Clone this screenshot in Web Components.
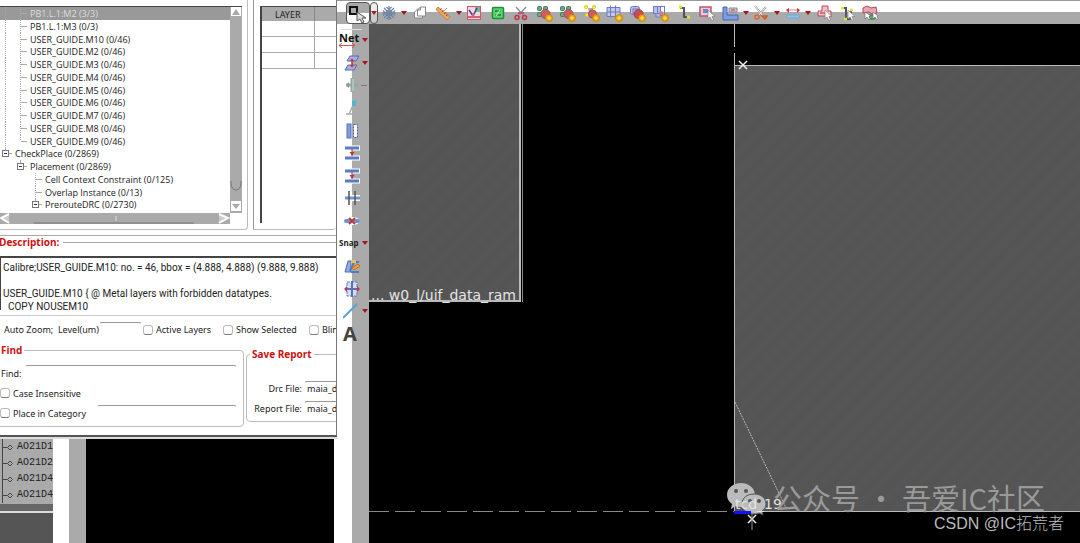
<!DOCTYPE html>
<html lang="en">
<head>
<meta charset="utf-8">
<title>DRC result viewer</title>
<style>
html,body{margin:0;height:100%;background:#000}
body{font-family:"Noto Sans","Open Sans",sans-serif;font-size:9px;line-height:13px;color:#222}
</style>
</head>
<body>
<eda-desktop></eda-desktop>
<script>
const define = (name, html, setup) => customElements.define(name, class extends HTMLElement {
  connectedCallback() {
    if (this.shadowRoot) return;
    const root = this.attachShadow({mode: 'open'});
    const t = document.createElement('template');
    t.innerHTML = typeof html === 'function' ? html(this) : html;
    root.append(t.content.cloneNode(true));
    if (setup) setup(this, root);
  }
});

/* ---------- icons, all on an 18 x 18 grid ---------- */
const plus = '<circle cx="14" cy="14" r="3.6" fill="#f0a400" stroke="#c27800" stroke-width=".6"/><path d="M14 12v4M12 14h4" stroke="#ffe98a" stroke-width="1"/>';
const cursor = '<path d="M10 6v9l2-2 2 4 1.500-1-1.500-3.500h3z" fill="#f4f4f4" stroke="#777" stroke-width=".6"/>';
const sq = (x, y, w, c, s) => `<rect x="${x}" y="${y}" width="${w}" height="${w}" rx="1" fill="${c}" stroke="${s}"/>`;
const ICONS = {
  flake: '<g stroke="#6d87a3" stroke-width="1.200" fill="none"><path d="M9 2v14M2 9h14M4 4l10 10M14 4L4 14"/><circle cx="9" cy="9" r="3"/><path d="M6.500 3L9 5.500 11.500 3M6.500 15L9 12.500l2.500 2.500M3 6.500L5.500 9 3 11.500M15 6.500L12.500 9l2.500 2.500"/></g>',
  copy: '<g fill="#fff" stroke="#888"><path d="M3.500 8l3-3h5v9h-8z"/><path d="M6.500 6l3-3h5v9h-8z"/><path d="M6.500 6h3V3" fill="none"/></g>',
  ruler: '<path d="M4 3l12 10-3 3L2 5.500z" fill="#e7a76c" stroke="#cf8048"/><path d="M6 6l1.500-1.500M8 8l1.500-1.500M10 10l2-2M12 12l1.500-1.500" stroke="#994a20"/><path d="M13 4l-3 3" stroke="#d98a50"/>',
  chart: '<rect x="2.500" y="2.500" width="13" height="13" fill="#f3d9dc" stroke="#d4576b"/><rect x="10" y="3" width="5" height="5" fill="#74b996"/><path d="M4 6l4 6 4-8" fill="none" stroke="#4a3fa8" stroke-width="1.500"/><path d="M3 13h12M8 9v5" stroke="#d2647a" stroke-width="2" fill="none"/>',
  green: '<rect x="3.500" y="3.500" width="11" height="11" rx="1" fill="#5dd56d" stroke="#1e8f35" stroke-width="1.500"/><path d="M6 7h6M6 11h6M7 6v2M11 10v2" stroke="#157a2a"/><path d="M11 6l-4 6" stroke="#b9f5bf"/>',
  cut: '<path d="M4 3l8 9M14 3L6 12" stroke="#8a93ad" stroke-width="1.500"/><path d="M6 9h6" stroke="#cc5063" stroke-width="2"/><circle cx="5" cy="13.500" r="2" fill="none" stroke="#c2344b" stroke-width="1.500"/><circle cx="12.500" cy="13.500" r="2" fill="none" stroke="#c2344b" stroke-width="1.500"/>',
  addgreen: sq(2.5,2.5,4,'#6aa987','#3c7a5a')+sq(8.5,2.5,4,'#6aa987','#3c7a5a')+sq(2.5,8.5,4,'#6aa987','#3c7a5a')+'<circle cx="10.500" cy="10" r="4.500" fill="#cc5e66" stroke="#b04a54"/>'+plus,
  addyellow: sq(2.5,1.5,3,'#f4e92c','#d6cc30')+sq(10.5,1.5,3,'#f4e92c','#d6cc30')+sq(3.5,9.5,3,'#f4e92c','#d6cc30')+'<path d="M6 4h5v5H7z" fill="#aaa"/><circle cx="10.500" cy="10" r="4" fill="#cc5e66" stroke="#b04a54"/>'+plus,
  addblue: '<g fill="#c0c6ec" stroke="#6f79c4"><path d="M2 3.500h13v9H2z"/><path d="M5.500 1.500v12M10.500 1.500v12M2 8h13"/></g>'+plus,
  addred: '<g fill="#b9c0ea" stroke="#6f79c4"><rect x="2.500" y="2.500" width="9" height="8" rx="2"/><rect x="5" y="5" width="6" height="5"/></g><circle cx="10.500" cy="10" r="4.500" fill="#c84d56" stroke="#a8404b"/>'+plus,
  addgroup: '<g fill="#b9c0ea" stroke="#6f79c4"><rect x="2.500" y="2.500" width="7" height="7"/><rect x="6.500" y="2.500" width="7" height="9" fill="none"/><path d="M5 9v4h6"/></g><circle cx="10" cy="9" r="2" fill="#d77c88"/>'+plus,
  route: '<path d="M5 4h4v9h4" fill="none" stroke="#555" stroke-width="2"/><path d="M4 3h3M12 13h3" stroke="#e5e22d" stroke-width="3"/>',
  select: '<rect x="2" y="3" width="11" height="9" fill="#e9c9d3" stroke="#c0566a" stroke-width="1.500"/><rect x="5" y="5" width="5" height="4" fill="#6c85cb"/>'+cursor,
  path: '<path d="M2 3h4v8h11v5H2z" fill="#7c9de0" stroke="#4766b5"/><path d="M8 4h8v4H8z" fill="#c9ccd4" stroke="#888"/><path d="M10 6h4" stroke="#d24"/>',
  scissors: '<path d="M3 2l8 10M14 3L6 12" stroke="#999" stroke-width="2"/><path d="M3 2l8 10M14 3L6 12" stroke="#fff" stroke-width=".8"/><circle cx="5" cy="13" r="2" fill="none" stroke="#e06926" stroke-width="1.500"/><path d="M10 12h5l-2 3z" fill="none" stroke="#d45b24" stroke-width="1.500"/>',
  stretch: '<path d="M3 6h12" stroke="#d08d90"/><path d="M2 6l3-2v5zM16 6l-3-2v5z" fill="#c34"/><rect x="2.500" y="11" width="13" height="3" rx="1" fill="#8bc4ec" stroke="#6aabd6"/>',
  shape: '<path d="M7 2h6v5h3v5H3V7h4z" fill="#efc3ca" stroke="#c1455a"/><path d="M5 9h5" stroke="#b23"/>'+cursor,
  net: '<path d="M4 4h4v11h5V6" fill="none" stroke="#4d5961" stroke-width="2"/><path d="M3 4h3M6 15h3M12 6h3" stroke="#e8e32a" stroke-width="2.500"/>'+cursor,
  multi: '<g fill="#e5a8b0" stroke="#b64356"><path d="M2 4l4-2 4 2 5-1 1 6-5 1-3-2-6 1z"/></g><path d="M8 11h6v4H8z" fill="#62a875" stroke="#2f7744"/><path d="M4 8v7l2-2 2 3 1-1-1-3h2zM12 8v7l2-2 2 3 1-1-1-3h1z" fill="#fff" stroke="#666" stroke-width=".6"/>',
  layers: '<path d="M7 2h9l-3 5H4z" fill="#a4afe2" stroke="#5c68b4"/><path d="M5 11h9l-3 5H2z" fill="#a4afe2" stroke="#5c68b4"/><path d="M9 5v8" stroke="#c33" stroke-width="1.500"/><path d="M7 7l2-2.500L11 7zM7 11l2 2.500 2-2.500z" fill="#c33"/>',
  move: '<path d="M9 2v14M3 9h12" stroke="#92aaa0" stroke-width="3"/><path d="M10 3v12" stroke="#c5ded1"/><path d="M3 9l3-3v6z" fill="#8a9d95"/>',
  pin: '<path d="M11 4L6 15M3 15h7" stroke="#a4b0aa" stroke-width="1.500" fill="none"/><path d="M9 2l4-1v6H9z" fill="#4fb8c8"/>',
  align: '<rect x="4" y="2" width="4" height="14" fill="#829edb" stroke="#5571b5"/><rect x="10.500" y="2.500" width="4" height="13" fill="#fff" stroke="#4a5fa8" stroke-dasharray="2 1"/>',
  spread: '<path d="M1 4h16M1 14h16" stroke="#fff" stroke-width="5"/><path d="M2 4h14M2 14h14" stroke="#587dc6" stroke-width="3"/><path d="M9 5v7" stroke="#b33"/><path d="M6.500 8h5L9 11.500z" fill="#c43232"/>',
  gate: '<path d="M2 9h15" stroke="#fff" stroke-width="6"/><path d="M2 9h15" stroke="#6f91d2" stroke-width="3"/><path d="M6 2v14M12 2v14" stroke="#555" stroke-width="1.500"/>',
  del: '<ellipse cx="9" cy="9" rx="8" ry="4" fill="#fff"/><path d="M3 9h12" stroke="#6f91d2" stroke-width="4" stroke-linecap="round"/><path d="M6 6l6 6M12 6l-6 6" stroke="#c53838" stroke-width="2"/>',
  edit: '<path d="M5 4h3v11H2z" fill="#8fabe2" stroke="#4c68b2"/><path d="M7 14l4-9h5M8 15h8" stroke="#5477bf" stroke-width="2" fill="none"/><path d="M8 3h5v3H8z" fill="#e4c45a"/><path d="M9 11l6-4 2 2-6 4z" fill="#f1a438" stroke="#c46f1d"/>',
  split: '<rect x="4" y="2" width="10" height="14" fill="#d5dcf3" stroke="#5e7cc2" stroke-dasharray="3 1"/><path d="M9 1v16M2 9h14" stroke="#5571b9" stroke-width="2"/><path d="M1 9l3-3v6zM17 9l-3-3v6z" fill="#c33"/>',
  line: '<path d="M0 16L14 2" stroke="#5da3d8" stroke-width="2"/>',
};

define('ui-icon', el => `<style>:host{display:block;width:18px;height:18px}svg{display:block}</style>
<svg width="18" height="18" viewBox="0 0 18 18" aria-hidden="true">${ICONS[el.getAttribute('name')]}</svg>`);

define('drop-arrow', `<style>:host{display:block;width:8px}button{display:block;width:8px;height:18px;padding:0;border:0;background:none}svg{display:block;margin:auto}</style>
<button aria-label="More"><svg width="6" height="4"><path d="M0 0h6L3 4z" fill="#a8141c"/></svg></button>`);

define('tool-button', el => `<style>:host{display:flex;align-items:center;flex:none}
button{border:0;background:none;padding:0;width:23px;height:20px;display:grid;place-items:center}</style>
<button aria-label="${el.getAttribute('icon')}"><ui-icon name="${el.getAttribute('icon')}"></ui-icon></button>${el.hasAttribute('menu') ? '<drop-arrow></drop-arrow>' : ''}`);

define('top-toolbar', `<style>
:host{display:flex;align-items:center;height:24px;box-sizing:border-box;padding-left:9px;border-top:1px solid #999;background:linear-gradient(#fff 11px,#aaa 11px)}
.pick{display:flex;flex:none;height:22px}
.pick button{box-sizing:border-box;height:22px;padding:0;border:1px solid #555;border-radius:4px;background:linear-gradient(#aaa 10px,#fff 10px)}
.pick button:first-child{width:24px}.pick button:last-child{width:8px;background:linear-gradient(#eee 50%,#ccc 50%)}
.pick svg{display:block}
.tools{display:flex;justify-content:space-between;flex:0 1 505px;margin-left:-1px}
</style>
<div class="pick"><button aria-label="Select"><svg width="22" height="20"><path d="M3 4h7v7H3z" fill="#aaa" stroke="#111" stroke-width="2"/><path d="M10 9v9l3-2 2 4 2-1-2-4h4z" fill="#ddd" stroke="#555"/></svg></button><button aria-label="Select menu"><svg width="6" height="20"><path d="M0 8h6L3 12z" fill="#b3141c"/></svg></button></div>
<div class="tools">${'flake* copy ruler* chart green cut addgreen addgreen addyellow addblue addred addgroup route select path* scissors* stretch* shape net multi'.split(' ').map(n => `<tool-button icon="${n.replace('*','')}" ${n.endsWith('*') ? 'menu' : ''}></tool-button>`).join('')}</div>`);

define('side-toolbar', `<style>
:host{display:block;box-sizing:border-box;padding-top:5px;background:linear-gradient(90deg,#fff 15px,#aaa 15px)}
.grip{height:1px;margin:0 7px -1px 4px;background:#ddd}
.list{display:grid;grid-auto-rows:1fr;height:316px}
.row{display:flex;align-items:center;padding-left:2px}
.row>:first-child{width:22px}
.row>tool-button{box-sizing:border-box;padding-left:3px}
button{border:0;background:none;padding:0;font:700 8px/10px "Open Sans",sans-serif;color:#222;text-align:left}
.net{font-size:11px;line-height:11px;color:#111}.net svg{display:block}
.row .big{font:700 20px/20px "Open Sans",sans-serif;color:#444;padding-left:4px}
i{width:6px;height:1px;background:#777}
</style><div class="grip"></div><div class="list">
<div class="row"><button class="net">Net<svg width="16" height="5"><path d="M0 2.500h16M3 0L0 2.500 3 5M13 0l3 2.500L13 5" stroke="#d25252" fill="none"/></svg></button><drop-arrow></drop-arrow></div>
${'layers* move- pin align spread spread gate del'.split(' ').map(row).join('')}
<div class="row"><button>Snap</button><drop-arrow></drop-arrow></div>
${'edit split line*'.split(' ').map(row).join('')}
<div class="row"><button class="big">A</button></div></div>`);
function row(n) {
  return `<div class="row"><tool-button icon="${n.replace(/[*-]/,'')}"></tool-button>${n.endsWith('*') ? '<drop-arrow></drop-arrow>' : n.endsWith('-') ? '<i></i>' : ''}</div>`;
}

/* ---------- result tree ---------- */
/* guides: one letter per 15px column: v line, t tee, l last, b box, n blank */
define('tree-row', el => `<style>
:host{display:flex;white-space:nowrap;align-items:stretch;min-height:0;line-height:13px}
:host([selected]){background:#999;color:#ddd}
svg{display:block;flex:none;width:15px;height:13px;overflow:visible}
</style>${[...el.getAttribute('guides')].map(g => `<svg viewBox="0 0 15 13" stroke="#aaa" fill="none">${{
  v: '<path d="M5.500 0v13" stroke-dasharray="1 1"/>',
  t: '<path d="M5.500 0v13" stroke-dasharray="1 1"/><path d="M6 6.500h6"/>',
  l: '<path d="M5.500 0v6" stroke-dasharray="1 1"/><path d="M6 6.500h6"/>',
  b: '<path d="M8 6.500h4M5.500 0v3"/><rect x="2.500" y="3.500" width="6" height="6" fill="#fff" stroke="#777"/><path d="M4 6.500h3" stroke="#333"/>',
  n: ''}[g]}</svg>`).join('')}<span><slot></slot></span>`);

define('result-tree', `<style>
:host{display:grid;grid-template-columns:1fr 12px;grid-template-rows:206px 11px;border-top:1px solid #444;box-sizing:border-box;font-family:"Open Sans",sans-serif}
.rows{display:grid;grid-template-rows:repeat(16,1fr);overflow:hidden;height:204px}
.v,.h{background:#aaa;display:flex;justify-content:space-between;align-items:center}
.v{flex-direction:column}
svg{display:block}
</style>
<div class="rows">
<tree-row guides="vt" selected>PB1.L.1:M2 (3/3)</tree-row><tree-row guides="vt">PB1.L.1:M3 (0/3)</tree-row>
${[10,2,3,4,5,6,7,8].map(n => `<tree-row guides="vt">USER_GUIDE.M${n} (0/46)</tree-row>`).join('')}
<tree-row guides="vl">USER_GUIDE.M9 (0/46)</tree-row>
<tree-row guides="b">CheckPlace (0/2869)</tree-row>
<tree-row guides="nb">Placement (0/2869)</tree-row>
<tree-row guides="nnt">Cell Context Constraint (0/125)</tree-row>
<tree-row guides="nnt">Overlap Instance (0/13)</tree-row>
<tree-row guides="nnb">PrerouteDRC (0/2730)</tree-row>
</div>
<div class="v"><svg width="12" height="10"><path d="M1 0h10v9H1z" fill="#fff"/><path d="M2 8h8L6 2z" fill="#aaa"/></svg>
<svg width="12" height="32"><path d="M1 0v3q1 6 5 6t5-6V0" stroke="#777" fill="none"/><path d="M1 20h10v10H1z" fill="#fff"/><path d="M2 23h8l-4 5z" fill="#aaa"/></svg></div>
<div class="h"><svg width="10" height="11"><path d="M9 1L1 5l8 5" fill="#ccc" stroke="#fff" stroke-width="2"/></svg><svg width="160" height="11"><path d="M0 10h160" stroke="#777"/><path d="M82 3v5" stroke="#ddd"/></svg><svg width="12" height="11"><path d="M1 1l9 4-9 5" fill="#ccc" stroke="#fff" stroke-width="2"/></svg></div>`);

define('layer-table', `<style>
:host{display:block;overflow:hidden;border-top:1px solid #444;border-left:2px solid #444;box-sizing:border-box}
table{border-collapse:collapse;width:100%;table-layout:fixed}
th{background:#aaa;font-weight:400;height:14px;line-height:13px;padding:0;border-right:1px solid #888}
td{height:15px;padding:0;border-bottom:1px solid #aaa;border-right:1px solid #aaa}
th:last-child,td:last-child{border-right:0}col:first-child{width:52px}
</style><table><colgroup><col><col></colgroup><thead><tr><th>LAYER</th><th></th></tr></thead><tbody><tr><td></td><td></td></tr><tr><td></td><td></td></tr><tr><td></td><td></td></tr></tbody></table>`);

/* ---------- form pieces ---------- */
define('check-box', `<style>
:host{display:block;flex:none}label{display:flex;align-items:center;gap:3px;white-space:nowrap}
input{appearance:none;margin:0;width:10px;height:10px;box-sizing:border-box;border:1px solid #bbb;border-bottom-color:#777;border-radius:3px;background:#fff}
</style><label><input type="checkbox"><slot></slot></label>`);

define('text-field', el => `<style>
:host{display:flex;align-items:center;min-width:0;height:20px}
label{white-space:nowrap;flex:none;box-sizing:border-box;width:var(--label,auto);text-align:right;padding-right:var(--gap,0px)}
input{flex:1;min-width:0;width:0;height:var(--h,16px);box-sizing:border-box;border:1px solid transparent;border-top-color:#999;border-radius:3px;padding:0 2px;margin:0;background:none;font:inherit;color:inherit;outline:0}
</style><label for="f"><slot></slot></label><input id="f" aria-label="${el.getAttribute('name') || ''}" value="${el.getAttribute('value') || ''}">`);

define('field-group', el => `<style>
:host{display:block;min-width:0}
fieldset{margin:0;min-width:0;border:1px solid #bbb;border-radius:4px;padding:var(--pad)}
legend{color:#c11;font:700 10px/14px "Open Sans",sans-serif;padding:0 2px;margin-left:var(--shift,0px)}
</style><fieldset><legend>${el.getAttribute('label')}</legend><slot></slot></fieldset>`);

define('drc-window', `<style>
:host{display:block;background:#fff;overflow:hidden;border-right:1px solid #777;border-bottom:2px solid #555;box-sizing:border-box}
.top{display:grid;grid-template-columns:248px 1fr;gap:5px;margin-bottom:5px}
.pane{border:1px solid #bbb;border-width:0 1px 1px 0;padding:6px 5px 5px 0;border-radius:0 0 4px 0}
.pane.r{border-left:1px solid #999;border-right:0;padding-left:6px;padding-right:0}
layer-table{height:217px}
.desc{border-top:1px solid #aaa}
h2{margin:0 0 8px -1px;font:700 10px/12px "Open Sans",sans-serif;color:#c11;display:flex;align-items:center;gap:4px}
h2::after{content:"";flex:1;height:1px;background:#aaa}
textarea{display:block;box-sizing:border-box;width:calc(100% + 4px);height:54px;margin:0 0 5px;padding:3px 2px 0;border:solid #444;border-width:2px 0 0 1px;resize:none;overflow:hidden;font:10px/13px Roboto,"Open Sans",sans-serif;color:inherit;background:#fff;white-space:pre}
.opts{display:flex;align-items:center;height:28px;border-top:1px solid #ccc;box-sizing:border-box;padding-left:4px}
.opts text-field{flex:none;width:138px;margin-right:1px}.opts check-box{margin-right:12px}
.groups{display:flex;align-items:flex-start;gap:2px;padding-bottom:8px}
.find{--pad:6px 6px 3px 3px;--shift:-2px;width:247px;margin-left:-3px;flex:none}
.save{--pad:17px 0 3px 3px;flex:1;margin:4px -6px 0 0}
.find .line{display:flex;align-items:center;height:20px;gap:11px;margin-left:-1px}.line text-field{flex:1}
.save text-field{--label:54px;--gap:2px;--h:14px}
</style>
<div class="top"><div class="pane"><result-tree></result-tree></div><div class="pane r"><layer-table></layer-table></div></div>
<div class="desc"><h2>Description:</h2>
<textarea aria-label="Description" spellcheck="false">Calibre;USER_GUIDE.M10: no. = 46, bbox = (4.888, 4.888) (9.888, 9.888)

USER_GUIDE.M10 { @ Metal layers with forbidden datatypes.
  COPY NOUSEM10</textarea></div>
<div class="opts"><text-field>Auto Zoom;&nbsp; Level(um)</text-field><check-box>Active Layers</check-box><check-box>Show Selected</check-box><check-box>Blink</check-box></div>
<div class="groups">
<field-group class="find" label="Find"><text-field style="--gap:3px">Find:</text-field><div class="line"><check-box>Case Insensitive</check-box></div><div class="line"><check-box>Place in Category</check-box><text-field name="Category"></text-field></div></field-group>
<field-group class="save" label="Save Report"><text-field value="maia_drc">Drc File:</text-field><text-field value="maia_drc">Report File:</text-field></field-group>
</div>`);

define('cell-browser', `<style>
:host{display:grid;grid-template-columns:53px 16px 17px 1fr 3px;border-top:2px solid #ddd;min-height:0;overflow:hidden;background:#fff}
.list{background:#555;overflow:hidden}
ul{list-style:none;margin:0;padding:0 0 1px;background:#aaa;border-bottom:7px solid #666;box-shadow:0 2px #ddd;font:10px/16px "Liberation Mono",monospace}
li{display:flex;align-items:center;gap:3px;height:16px;white-space:nowrap;color:#222}
svg{display:block;flex:none}
.g{background:#aaa}.k{background:#000}
</style><div class="list"><ul>${['AO21D1','AO21D2','AO21D4','AO21D4'].map(t => `<li><svg width="14" height="16" stroke="#444" fill="none"><path d="M2.500 0v16M3 8.500h4"/><path d="M10 6l2.500 2.500L10 11 7.500 8.500z"/></svg>${t}</li>`).join('')}</ul></div><div></div><div class="g"></div><div class="k"></div>`);

/* ---------- layout canvas: shapes at free positions ---------- */
define('layout-canvas', `<style>
:host{display:block;position:relative;overflow:hidden;background:#000;color:#e4e4e4}
.cell{position:absolute;box-sizing:border-box;background:repeating-linear-gradient(135deg,#545454,#565656 7px,#545454 14px)}
.a{left:0;top:0;width:152px;height:278px;border:solid #bbb;border-width:0 2px 2px 0}
.edge{position:absolute;left:153px;top:0;width:1px;height:278px;background:#888}
.b{left:365px;right:0;top:41px;height:447px;border:1px solid #bbb;border-right:0}
.lab{position:absolute;white-space:nowrap;font:14px/16px "DejaVu Sans",sans-serif}
.l1{left:2px;top:263px}.l2{left:366px;top:472px}
svg{position:absolute;left:0;top:0}
.wm{position:absolute;right:35px;bottom:26px;color:#9a9a9a;font:400 29px/40px "Noto Sans CJK SC",sans-serif;white-space:nowrap}
.csdn{position:absolute;right:16px;bottom:7px;color:#bbb;font:300 16px/24px "Liberation Sans","Noto Sans CJK SC",sans-serif;white-space:nowrap}
.chat{left:357px;top:457px}
</style>
<div class="cell a"></div><div class="edge"></div><div class="cell b"></div>
<svg class="chat" width="42" height="36"><path d="M15 2C7 2 1 7 1 14c0 4 2 7 5 9l-1 5 5-3c2 1 4 1 6 1-1-8 5-13 13-13C28 6 22 2 15 2z" fill="#bbb" stroke="none"/><path d="M28 13c-7 0-12 4-12 10s5 10 12 10c2 0 4 0 5-1l4 2-1-4c3-2 4-4 4-7 0-6-5-10-12-10z" fill="#bbb" stroke="#555"/><g fill="#555" stroke="none"><circle cx="10" cy="10" r="2"/><circle cx="20" cy="10" r="2"/><circle cx="24" cy="20" r="2"/><circle cx="33" cy="20" r="2"/></g></svg>
<svg width="711" height="519" fill="none" stroke="#bbb">
<path d="M365.500 0v23M365.500 29v13"/>
<path d="M0 487.500h365" stroke="#888" stroke-dasharray="20 6"/>
<path d="M366 378l52 108" stroke-dasharray="2 1"/>
<path d="M370 37l8 8M378 37l-8 8M379 491l8 8M387 491l-8 8" stroke="#eee" stroke-width="1.500"/><path d="M383 488v18" stroke="#999"/>
<path d="M365 488.500h17" stroke="#11f" stroke-width="3"/>
</svg>
<span class="lab l1">... w0_l/uif_data_ram</span><span class="lab l2">tcd_19</span>
<div class="wm">公众号 · 吾爱IC社区</div><div class="csdn">CSDN @IC拓荒者</div>`);

define('eda-desktop', `<style>
:host{display:grid;grid-template-columns:337px minmax(0,1fr);min-height:100vh}
.left{display:grid;grid-template-rows:auto minmax(0,1fr);min-width:0}
.right{display:grid;grid-template-rows:24px minmax(0,1fr);min-width:0}
.work{display:grid;grid-template-columns:32px minmax(0,1fr)}
</style><div class="left"><drc-window></drc-window><cell-browser></cell-browser></div>
<div class="right"><top-toolbar></top-toolbar><div class="work"><side-toolbar></side-toolbar><layout-canvas></layout-canvas></div></div>`);
</script>
</body>
</html>
